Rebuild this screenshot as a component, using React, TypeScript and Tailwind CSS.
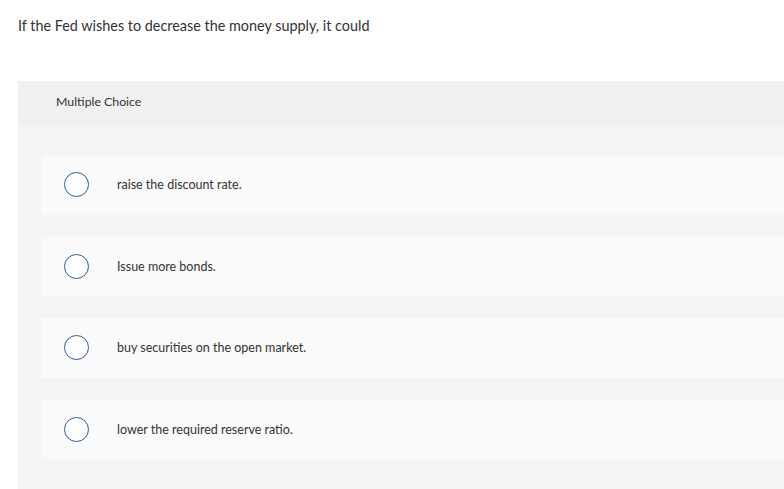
const options = [
  'raise the discount rate.',
  'Issue more bonds.',
  'buy securities on the open market.',
  'lower the required reserve ratio.',
];

export default function App() {
  return (
    <div className="min-h-screen bg-white font-['Lato','Open_Sans',sans-serif] text-[#333]">
      <div className="pt-[16px] pl-[18px]">
        <p className="text-[14.4px] leading-[19px]">
          If the Fed wishes to decrease the money supply, it could
        </p>
      </div>

      <div className="mt-[46px] ml-[18px] bg-[#f4f4f4] pb-[30px]">
        <div className="h-[45px] bg-[#f0f0f0] pl-[38px] pb-[3px] flex items-center">
          <span className="text-[12.3px]">Multiple Choice</span>
        </div>

        <div className="pt-[29px] pl-[23px] flex flex-col gap-[22px]">
          {options.map((opt) => (
            <div
              key={opt}
              className="h-[59.5px] bg-[#fafafa] rounded-l-[3px] flex items-center pl-[23px]"
            >
              <div className="w-[25px] h-[25px] rounded-full border-[1.5px] border-[#2a5d96] bg-white" />
              <span className="ml-[28px] pt-[2px] text-[12.5px]">{opt}</span>
            </div>
          ))}
        </div>
      </div>
    </div>
  );
}
